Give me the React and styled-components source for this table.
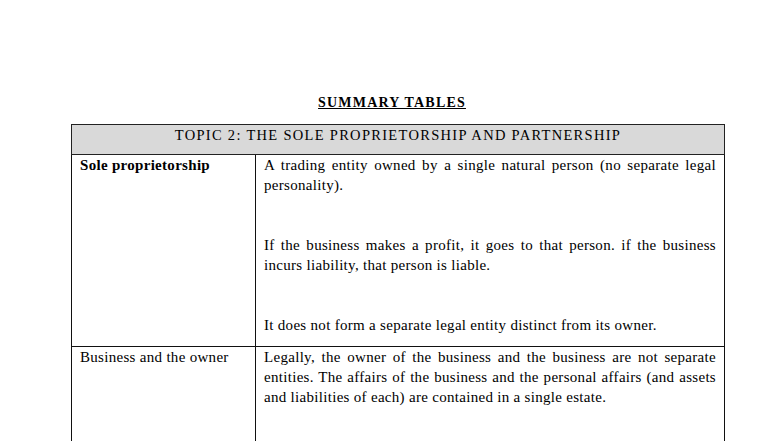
import React from 'react'
import styled, { createGlobalStyle } from 'styled-components'

const GlobalStyle = createGlobalStyle`
  html, body {
    margin: 0;
    padding: 0;
    background: #fff;
  }
  body {
    font-family: "Liberation Serif", "Times New Roman", serif;
    color: #000;
  }
`

const Page = styled.div`
  width: 784px;
  height: 441px;
  overflow: hidden;
  padding: 93px 0 0 71px;
  box-sizing: border-box;
`

const Title = styled.h1`
  width: 654px;
  box-sizing: border-box;
  padding-right: 12px;
  margin: 0 0 11px;
  font-size: 14px;
  letter-spacing: 1.2px;
  line-height: 20px;
  font-weight: bold;
  text-align: center;
  text-decoration: underline;
`

const Table = styled.table`
  width: 654px;
  border-collapse: collapse;
  table-layout: fixed;
  font-size: 15px;
  letter-spacing: 0.3px;
  line-height: 20px;
`

const HeadCell = styled.th`
  height: 20px;
  padding: 0 8px 9px;
  background: #d9d9d9;
  border: 1px solid #222;
  font-weight: normal;
  font-size: 14.5px;
  letter-spacing: 1.3px;
  text-align: center;
  vertical-align: top;
`

const Cell = styled.td`
  border: 1px solid #111;
  padding: 0 8px;
  vertical-align: top;
  height: ${(p) => p.$h || 'auto'};
  font-weight: ${(p) => (p.$bold ? 'bold' : 'normal')};
  text-align: ${(p) => (p.$justify ? 'justify' : 'left')};
`

const Para = styled.p`
  margin: 0 0 ${(p) => (p.$last ? '0' : '40px')};
`

export default function App() {
  return (
    <Page>
      <GlobalStyle />
      <Title>SUMMARY TABLES</Title>
      <Table>
        <colgroup>
          <col style={{ width: '184px' }} />
          <col />
        </colgroup>
        <thead>
          <tr>
            <HeadCell colSpan={2}>TOPIC 2: THE SOLE PROPRIETORSHIP AND PARTNERSHIP</HeadCell>
          </tr>
        </thead>
        <tbody>
          <tr>
            <Cell $bold $h="191px">Sole proprietorship</Cell>
            <Cell $justify $h="191px">
              <Para>A trading entity owned by a single natural person (no separate legal personality).</Para>
              <Para>If the business makes a profit, it goes to that person. if the business incurs liability, that person is liable.</Para>
              <Para $last>It does not form a separate legal entity distinct from its owner.</Para>
            </Cell>
          </tr>
          <tr>
            <Cell $h="120px">Business and the owner</Cell>
            <Cell $justify $h="120px">
              <Para $last>Legally, the owner of the business and the business are not separate entities. The affairs of the business and the personal affairs (and assets and liabilities of each) are contained in a single estate.</Para>
            </Cell>
          </tr>
        </tbody>
      </Table>
    </Page>
  )
}
